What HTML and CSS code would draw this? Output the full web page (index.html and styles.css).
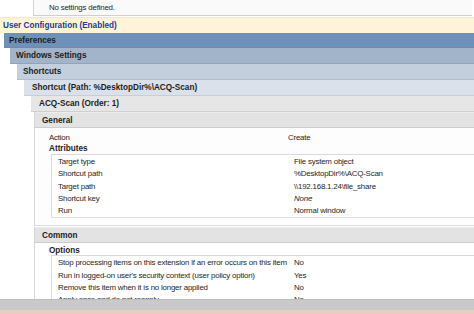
FILE: index.html
```html
<!DOCTYPE html>
<html lang="en">
<head>
    <meta charset="UTF-8">
    <title>Group Policy Settings Report</title>
    <link rel="stylesheet" href="styles.css">
</head>
<body>
    <div class="report">
        <div class="empty-row">No settings defined.</div>
        <div class="config-head">User Configuration (Enabled)</div>

        <div class="level level-1">
            <div class="bar bar-1">Preferences</div>
            <div class="level level-2">
                <div class="bar bar-2">Windows Settings</div>
                <div class="level level-3">
                    <div class="bar bar-3">Shortcuts</div>
                    <div class="level level-4">
                        <div class="bar bar-4">Shortcut (Path: %DesktopDir%\ACQ-Scan)</div>
                        <div class="level level-5">
                            <div class="bar bar-5">ACQ-Scan (Order: 1)</div>

                            <div class="group">
                                <div class="bar group-bar">General</div>
                                <div class="group-body general">
                                    <div class="pair">
                                        <span>Action</span>
                                        <span>Create</span>
                                    </div>
                                    <div class="sub-title">Attributes</div>
                                    <div class="sub-table">
                                        <div class="pair"><span>Target type</span><span>File system object</span></div>
                                        <div class="pair"><span>Shortcut path</span><span>%DesktopDir%\ACQ-Scan</span></div>
                                        <div class="pair"><span>Target path</span><span>\\192.168.1.24\file_share</span></div>
                                        <div class="pair"><span>Shortcut key</span><span class="italic">None</span></div>
                                        <div class="pair"><span>Run</span><span>Normal window</span></div>
                                    </div>
                                </div>
                            </div>

                            <div class="group">
                                <div class="bar group-bar">Common</div>
                                <div class="group-body">
                                    <div class="sub-title options">Options</div>
                                    <div class="sub-table">
                                        <div class="pair"><span>Stop processing items on this extension if an error occurs on this item</span><span>No</span></div>
                                        <div class="pair"><span>Run in logged-on user's security context (user policy option)</span><span>Yes</span></div>
                                        <div class="pair"><span>Remove this item when it is no longer applied</span><span>No</span></div>
                                        <div class="pair"><span>Apply once and do not reapply</span><span>No</span></div>
                                    </div>
                                </div>
                            </div>

                        </div>
                    </div>
                </div>
            </div>
        </div>
    </div>
    <div class="scroll-strip"></div>
    <div class="edge-strip"></div>
</body>
</html>
```

FILE: styles.css
```css
html, body {
    margin: 0;
    padding: 0;
}
body {
    width: 474px;
    height: 314px;
    overflow: hidden;
    display: flex;
    flex-direction: column;
    background-color: #ffffff;
    font-family: "Liberation Sans", Arial, sans-serif;
    font-size: 7.9px;
    letter-spacing: -0.2px;
    color: #262626;
}
.report {
    flex: 1;
    overflow: hidden;
}
.empty-row {
    margin-left: 33px;
    margin-right: 2px;
    height: 15px;
    line-height: 15px;
    padding-left: 15px;
    background-color: #fafafa;
    border-left: 1px solid #d4d4d4;
    border-bottom: 1px solid #cfcfcf;
    margin-bottom: 1px;
}
.config-head {
    height: 15px;
    line-height: 15px;
    padding-left: 3px;
    background-color: #fff3d8;
    border-top: 1px solid #f4e8cc;
    color: #23399a;
    font-weight: bold;
    font-size: 8.2px;
    letter-spacing: 0;
}
.bar {
    height: 15px;
    line-height: 15px;
    padding-left: 6px;
    font-weight: bold;
    font-size: 8.2px;
    letter-spacing: 0;
    color: #1c1c1c;
    border-bottom: 1px solid #b9bfca;
}
.level-1 { margin-left: 4px; }
.level-2 { margin-left: 6px; }
.level-3 { margin-left: 7px; }
.level-4 { margin-left: 7px; }
.level-5 { margin-left: 7px; }

.bar-1 {
    padding-left: 5px;
    background-color: #6d91b8;
    border-bottom-color: #7c86a2;
    height: 14px;
}
.bar-2 { background-color: #a1b4c9; border-bottom-color: #95a3b6; }
.bar-3 { background-color: #c3cfdd; border-bottom-color: #b4bccb; }
.bar-4 { background-color: #dbe1ea; padding-left: 8px; border-bottom-color: #c9cdd4; }
.bar-5 { background-color: #e6e6e6; padding-left: 8px; border-bottom-color: #d0d0d0; }

.group {
    margin-left: 3px;
    border-left: 1px solid #d6d6d6;
}
.group-bar {
    height: 14px;
    padding-left: 7px;
    background-color: #e3e3e3;
    border-top: 1px solid #ececec;
    border-bottom: 1px solid #cdcdcd;
}
.group-body {
    padding-left: 14px;
}
.general {
    padding-top: 3px;
    padding-bottom: 7px;
    border-bottom: 1px solid #dcdcdc;
    margin-bottom: 1px;
    background-color: #fdfdfd;
}
.pair {
    display: grid;
    grid-template-columns: 239px 1fr;
    height: 12.25px;
    line-height: 12.25px;
    white-space: nowrap;
}
.general > .pair {
    height: 13px;
    line-height: 13px;
}
.sub-title {
    height: 10px;
    line-height: 10px;
    font-weight: bold;
    font-size: 8.2px;
    letter-spacing: 0;
    color: #1c1c1c;
}
.sub-title.options {
    height: 11px;
    line-height: 13px;
    padding-top: 1px;
}
.sub-table {
    margin-left: 2px;
    padding-top: 1px;
    padding-left: 6px;
    border-left: 1px solid #dadada;
    border-top: 1px solid #dadada;
    border-bottom: 1px solid #e2e2e2;
    background-color: #ffffff;
}
.sub-table .pair {
    grid-template-columns: 236px 1fr;
}
.italic {
    font-style: italic;
}
.scroll-strip {
    flex: none;
    height: 10px;
    background-color: #c9c9c9;
    border-top: 1px solid #bdbdbd;
}
.edge-strip {
    flex: none;
    height: 4px;
    background-color: #ebcdbd;
}
```
